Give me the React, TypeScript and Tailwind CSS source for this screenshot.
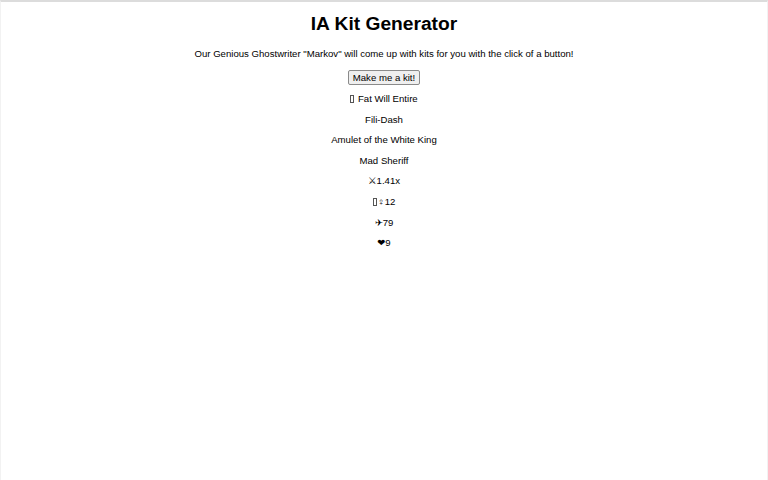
import React from 'react';

const Tofu: React.FC = () => (
  <span className="inline-block w-[4px] h-[8px] border border-[#555] align-[-1px] mr-[1px]"></span>
);

const App: React.FC = () => {
  const lines: React.ReactNode[] = [
    <><Tofu /> Fat Will Entire</>,
    'Fili-Dash',
    'Amulet of the White King',
    'Mad Sheriff',
    '⚔1.41x',
    <><Tofu />♀12</>,
    '✈79',
    '❤9',
  ];

  return (
    <div
      className="min-h-[480px] bg-white border-t-2 border-[#dcdcdc] border-l border-r border-l-[#f2f2f2] border-r-[#f2f2f2] text-black text-center"
      style={{ fontFamily: '"Liberation Sans", "DejaVu Sans", sans-serif' }}
    >
      <h1 className="pt-[11px] text-[19.2px] leading-[22px] font-bold">IA Kit Generator</h1>

      <p className="mt-[13px] text-[9.6px] leading-[11px]">
        Our Genious Ghostwriter "Markov" will come up with kits for you with the click of a button!
      </p>

      <div className="mt-[11px] flex justify-center">
        <button
          type="button"
          className="h-[15px] px-[4px] text-[9.6px] leading-[11px] bg-[#efefef] border border-[#8a8a8a] rounded-[2px]"
        >
          Make me a kit!
        </button>
      </div>

      <div className="mt-[8px] flex flex-col gap-[9.6px]">
        {lines.map((line, i) => (
          <p key={i} className="text-[9.6px] leading-[11px]">
            {line}
          </p>
        ))}
      </div>
    </div>
  );
};

export default App;
